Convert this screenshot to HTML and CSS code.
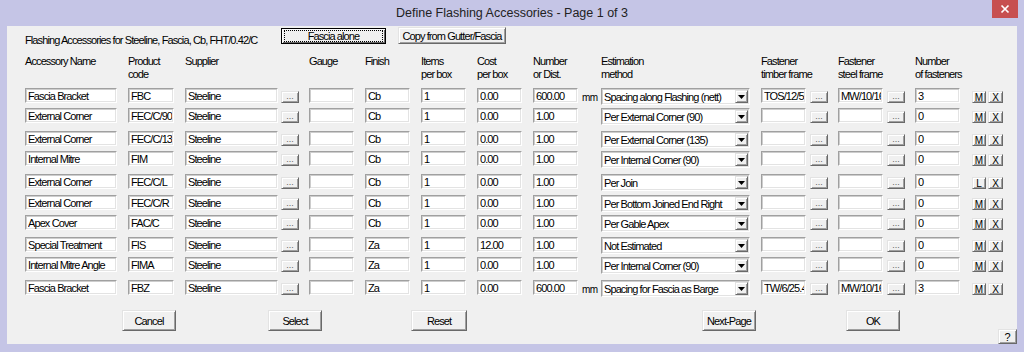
FILE: index.html
```html
<!DOCTYPE html>
<html lang="en">
<head>
    <meta charset="UTF-8">
    <title>Define Flashing Accessories</title>
    <link rel="stylesheet" href="styles.css">
</head>
<body>
<div class="window">
    <div class="titlebar">
        <span></span>
        <span class="title">Define Flashing Accessories - Page 1 of 3</span>
        <span class="close">
            <svg width="10" height="10" viewBox="0 0 10 10"><path d="M1.5 1.5 L8.5 8.5 M8.5 1.5 L1.5 8.5" stroke="#fff" stroke-width="1.7"/></svg>
        </span>
    </div>
    <div class="client">
        <div class="topbar">
            <span class="intro">Flashing Accessories for Steeline, Fascia, Cb, FHT/0.42/C</span>
            <button class="btn btn-default"><span class="focus">Fascia alone</span></button>
            <button class="btn btn-copy">Copy from Gutter/Fascia</button>
        </div>
        <div class="table" id="table">
            <div class="row">
                <span class="head">Accessory Name</span>
                <span class="head">Product<br>code</span>
                <span class="head">Supplier</span>
                <span></span>
                <span class="head">Gauge</span>
                <span class="head">Finish</span>
                <span class="head">Items<br>per box</span>
                <span class="head">Cost<br>per box</span>
                <span class="head span2">Number<br>or Dist.</span>
                <span class="head">Estimation<br>method</span>
                <span class="head span2">Fastener<br>timber frame</span>
                <span class="head span2">Fastener<br>steel frame</span>
                <span class="head span3">Number<br>of fasteners</span>
            </div>
        </div>
        <div class="actions">
            <button class="btn push push-cancel">Cancel</button>
            <button class="btn push push-select">Select</button>
            <button class="btn push push-reset">Reset</button>
            <button class="btn push push-next">Next-Page</button>
            <button class="btn push push-ok">OK</button>
            <button class="btn help">?</button>
        </div>
    </div>
</div>
<script>
    const accessories = [
        ['Fascia Bracket', 'FBC', 'Cb', '0.00', '600.00', true, 'Spacing along Flashing (nett)', 'TOS/12/50', 'MW/10/16', '3', 'M'],
        ['External Corner', 'FEC/C/90', 'Cb', '0.00', '1.00', false, 'Per External Corner (90)', '', '', '0', 'M'],
        ['External Corner', 'FEC/C/135', 'Cb', '0.00', '1.00', false, 'Per External Corner (135)', '', '', '0', 'M'],
        ['Internal Mitre', 'FIM', 'Cb', '0.00', '1.00', false, 'Per Internal Corner (90)', '', '', '0', 'M'],
        ['External Corner', 'FEC/C/L', 'Cb', '0.00', '1.00', false, 'Per Join', '', '', '0', 'L'],
        ['External Corner', 'FEC/C/R', 'Cb', '0.00', '1.00', false, 'Per Bottom Joined End Right', '', '', '0', 'M'],
        ['Apex Cover', 'FAC/C', 'Cb', '0.00', '1.00', false, 'Per Gable Apex', '', '', '0', 'M'],
        ['Special Treatment', 'FIS', 'Za', '12.00', '1.00', false, 'Not Estimated', '', '', '0', 'M'],
        ['Internal Mitre Angle', 'FIMA', 'Za', '0.00', '1.00', false, 'Per Internal Corner (90)', '', '', '0', 'M'],
        ['Fascia Bracket', 'FBZ', 'Za', '0.00', '600.00', true, 'Spacing for Fascia as Barge', 'TW/6/25.4', 'MW/10/16', '3', 'M']
    ];
    const table = document.getElementById('table');
    const arrow = '<svg width="7" height="4" viewBox="0 0 7 4"><path d="M0 0 H7 L3.5 4 Z" fill="#000"/></svg>';
    const field = (cls, value) => `<input class="field ${cls}" value="${value}">`;
    const dots = '<button class="btn dots">...</button>';
    accessories.forEach(a => {
        const row = document.createElement('div');
        row.className = 'row';
        row.innerHTML = `
      ${field('w-name', a[0])}
      ${field('w-code', a[1])}
      ${field('w-sup', 'Steeline')}
      ${dots}
      ${field('w-sm', '')}
      ${field('w-sm', a[2])}
      ${field('w-sm', '1')}
      ${field('w-sm', a[3])}
      ${field('w-sm', a[4])}
      <span class="unit">${a[5] ? 'mm' : ''}</span>
      <div class="combo"><span class="combo-text">${a[6]}</span><span class="btn arrow">${arrow}</span></div>
      ${field('w-sm', a[7])}
      ${dots}
      ${field('w-sm', a[8])}
      ${dots}
      ${field('w-sm', a[9])}
      <button class="btn mini">${a[10]}</button>
      <button class="btn mini mini-x">X</button>
    `;
        table.appendChild(row);
    });
</script>
</body>
</html>
```

FILE: styles.css
```css
body {
    margin: 0;
    font-family: 'Liberation Sans', Arial, sans-serif;
    font-size: 11px;
    letter-spacing: -0.9px;
    color: #000;
}
.window {
    width: 1024px;
    height: 352px;
    background: #c5c5e6;
}
.titlebar {
    height: 26px;
    display: grid;
    grid-template-columns: 1fr auto 1fr;
    align-items: start;
}
.title {
    font-size: 12.5px;
    letter-spacing: 0;
    line-height: 17px;
    padding-top: 5px;
    color: #222;
}
.close {
    justify-self: end;
    width: 26px;
    height: 18px;
    margin-right: 6px;
    background: #c75050;
    display: flex;
    align-items: center;
    justify-content: center;
}
.client {
    margin: 0 7px;
    height: 318px;
    box-sizing: border-box;
    padding: 1px 0 0 18px;
    background: #f0f0f0;
    display: flex;
    flex-direction: column;
}
.btn {
    box-sizing: border-box;
    padding: 0;
    font: inherit;
    letter-spacing: inherit;
    color: #000;
    background: #f0f0f0;
    border: 1px solid;
    border-color: #e3e3e3 #696969 #696969 #e3e3e3;
    box-shadow: inset 1px 1px #fff, inset -1px -1px #a0a0a0;
    display: flex;
    align-items: center;
    justify-content: center;
}
.topbar {
    display: flex;
    align-items: flex-start;
    height: 17px;
}
.intro {
    width: 256px;
    margin-top: 7px;
    line-height: 13px;
}
.btn-default {
    width: 105px;
    height: 16px;
    margin-top: 1px;
    border-color: #000;
    box-shadow: inset 1px 1px #fff, inset -1px -1px #696969;
}
.focus {
    box-sizing: border-box;
    width: 99px;
    height: 12px;
    line-height: 10px;
    border: 1px dotted #000;
    text-align: center;
}
.btn-copy {
    width: 108px;
    height: 17px;
    margin-left: 12px;
}
.table {
    display: grid;
    grid-template-columns: 103px 57px 96px 28px 56px 56px 56px 56px 45px 23px 160px 49px 28px 49px 28px 57px 16px 15px;
    grid-template-rows: 33px 20px 23px 20px 23px 21px 20px 22px 20px 23px 20px;
    align-items: start;
    margin-top: 11px;
}
.row {
    display: contents;
}
.head {
    line-height: 13px;
}
.span2 {
    grid-column: span 2;
}
.span3 {
    grid-column: span 3;
}
.field {
    box-sizing: border-box;
    height: 15px;
    margin: 0;
    padding: 0 1px 0 2px;
    font: inherit;
    letter-spacing: inherit;
    color: #000;
    background: #fff;
    border: 1px solid;
    border-color: #a0a0a0 #fff #fff #a0a0a0;
    box-shadow: inset 1px 1px #cdcdcd, inset -1px -1px #e3e3e3;
    outline: none;
}
.w-name {
    width: 92px;
}
.w-code {
    width: 46px;
}
.w-sup {
    width: 93px;
}
.w-sm {
    width: 45px;
}
.dots {
    width: 18px;
    height: 12px;
    margin-top: 3px;
    font-size: 9px;
    letter-spacing: 0;
    color: #666;
    align-items: flex-end;
    padding-bottom: 1px;
}
.unit {
    font-size: 10px;
    letter-spacing: -0.5px;
    padding: 4px 0 0 4px;
}
.combo {
    box-sizing: border-box;
    width: 149px;
    height: 17px;
    background: #fff;
    border: 1px solid;
    border-color: #a0a0a0 #fff #fff #a0a0a0;
    box-shadow: inset 1px 1px #cdcdcd, inset -1px -1px #e3e3e3;
    display: flex;
    align-items: center;
    padding: 1px 1px 1px 2px;
}
.combo-text {
    flex: 1;
    white-space: nowrap;
    overflow: hidden;
    padding-top: 1px;
}
.arrow {
    width: 13px;
    height: 13px;
}
.mini {
    width: 14px;
    height: 12px;
    margin-top: 3px;
    font-size: 10px;
    letter-spacing: 0;
}
.mini-x {
    width: 15px;
}
.actions {
    display: flex;
    align-items: flex-start;
    height: 34px;
    margin-top: 10px;
}
.push {
    width: 54px;
    height: 21px;
}
.push-cancel {
    margin-left: 97px;
}
.push-select {
    margin-left: 92px;
}
.push-reset {
    width: 56px;
    margin-left: 89px;
}
.push-next {
    margin-left: 235px;
}
.push-ok {
    margin-left: 90px;
}
.help {
    align-self: flex-end;
    width: 19px;
    height: 15px;
    margin-left: 98px;
    letter-spacing: 0;
}
```
